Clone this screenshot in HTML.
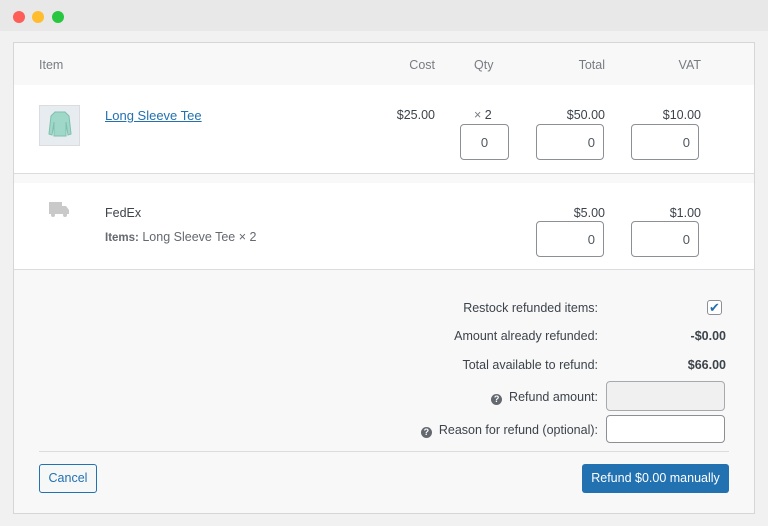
<!DOCTYPE html>
<html><head><style>
*{margin:0;padding:0;box-sizing:border-box}
body{width:768px;height:526px;background:#f1f1f1;font-family:"Liberation Sans",sans-serif;font-size:12.5px;color:#3c434a;position:relative;overflow:hidden}
.a{position:absolute}
.dot{position:absolute;top:11px;width:12px;height:12px;border-radius:50%}
.card{position:absolute;left:13px;top:42px;width:742px;height:472px;background:#f8f8f8;border:1px solid #d6d6d6}
.r{text-align:right}
.inp{position:absolute;background:#fff;border:1px solid #8c8f94;border-radius:4px;height:36px;text-align:right;padding:10px 8px;font-size:13px;color:#50575e}
.h{color:#787c82;font-size:12.5px}
</style></head><body>
<div class="a" style="left:0;top:0;width:768px;height:31px;background:#e8e8e8"></div>
<div class="dot" style="left:13px;background:#fd5e57"></div>
<div class="dot" style="left:32px;background:#febc2e"></div>
<div class="dot" style="left:52px;background:#29c641"></div>
<div class="card"></div>
<div class="a" style="left:14px;top:85px;width:740px;height:89px;background:#fff;border-bottom:1px solid #dcdcde"></div>
<div class="a" style="left:14px;top:183px;width:740px;height:87px;background:#fff;border-bottom:1px solid #dcdcde"></div>
<div class="a h" style="left:39px;top:58px">Item</div>
<div class="a h r" style="left:380px;top:58px;width:55px">Cost</div>
<div class="a h" style="left:474px;top:58px">Qty</div>
<div class="a h r" style="left:540px;top:58px;width:65px">Total</div>
<div class="a h r" style="left:640px;top:58px;width:61px">VAT</div>
<div class="a" style="left:39px;top:105px;width:41px;height:41px;background:#e6ecef;border:1px solid #dcdcde"></div>
<svg class="a" style="left:47px;top:110px" width="26" height="30" viewBox="0 0 26 30"><path d="M8 2 L18 2 L22 6 L24 24 L21 25 L19 12 L19 26 L7 26 L7 12 L5 25 L2 24 L4 6 Z" fill="#9fd8c8" stroke="#7fbfae" stroke-width="1"/></svg>
<div class="a" style="left:105px;top:108px;color:#2271b1;text-decoration:underline;font-size:13px">Long Sleeve Tee</div>
<div class="a r" style="left:380px;top:108px;width:55px">$25.00</div>
<div class="a" style="left:474px;top:108px;color:#787c82">× <span style="color:#3c434a">2</span></div>
<div class="a r" style="left:540px;top:108px;width:65px">$50.00</div>
<div class="a r" style="left:640px;top:108px;width:61px">$10.00</div>
<div class="inp" style="left:460px;top:124px;width:49px;text-align:center">0</div>
<div class="inp" style="left:536px;top:124px;width:68px">0</div>
<div class="inp" style="left:631px;top:124px;width:68px">0</div>
<svg class="a" style="left:49px;top:202px" width="21" height="16" viewBox="0 0 21 16"><rect x="0" y="0" width="13" height="12" fill="#c9c9c9"/><path d="M13 4 H17 L20 8 V12 H13 Z" fill="#c9c9c9"/><circle cx="4" cy="13" r="2" fill="#c9c9c9"/><circle cx="16" cy="13" r="2" fill="#c9c9c9"/></svg>
<div class="a" style="left:105px;top:206px">FedEx</div>
<div class="a" style="left:105px;top:230px;color:#646970"><b style="font-size:11.5px">Items:</b> Long Sleeve Tee × 2</div>
<div class="a r" style="left:540px;top:206px;width:65px">$5.00</div>
<div class="a r" style="left:640px;top:206px;width:61px">$1.00</div>
<div class="inp" style="left:536px;top:221px;width:68px">0</div>
<div class="inp" style="left:631px;top:221px;width:68px">0</div>
<div class="a r" style="left:300px;top:301px;width:298px">Restock refunded items:</div>
<div class="a" style="left:707px;top:300px;width:15px;height:15px;border:1px solid #8c8f94;border-radius:3px;background:#fff;color:#2271b1;font-size:13px;line-height:13px;text-align:center">✔</div>
<div class="a r" style="left:300px;top:329px;width:298px">Amount already refunded:</div>
<div class="a r" style="left:640px;top:329px;width:86px;font-weight:bold">-$0.00</div>
<div class="a r" style="left:300px;top:358px;width:298px">Total available to refund:</div>
<div class="a r" style="left:640px;top:358px;width:86px;font-weight:bold">$66.00</div>
<div class="a r" style="left:300px;top:390px;width:298px"><span style="display:inline-block;width:11px;height:11px;border-radius:50%;background:#646970;color:#fff;font-size:9px;line-height:11px;text-align:center;font-weight:bold;vertical-align:-1px">?</span>&nbsp; Refund amount:</div>
<div class="a" style="left:606px;top:381px;width:119px;height:30px;background:#f0f0f1;border:1px solid #a7aaad;border-radius:4px"></div>
<div class="a r" style="left:300px;top:423px;width:298px"><span style="display:inline-block;width:11px;height:11px;border-radius:50%;background:#646970;color:#fff;font-size:9px;line-height:11px;text-align:center;font-weight:bold;vertical-align:-1px">?</span>&nbsp; Reason for refund (optional):</div>
<div class="a" style="left:606px;top:415px;width:119px;height:28px;background:#fff;border:1px solid #8c8f94;border-radius:4px"></div>
<div class="a" style="left:39px;top:451px;width:690px;height:1px;background:#dcdcde"></div>
<div class="a" style="left:39px;top:464px;width:58px;height:29px;border:1px solid #2271b1;border-radius:3px;color:#2271b1;background:#f6f7f7;text-align:center;line-height:27px">Cancel</div>
<div class="a" style="left:582px;top:464px;width:147px;height:29px;background:#2271b1;border-radius:3px;color:#fff;text-align:center;line-height:29px">Refund $0.00 manually</div>
</body></html>
